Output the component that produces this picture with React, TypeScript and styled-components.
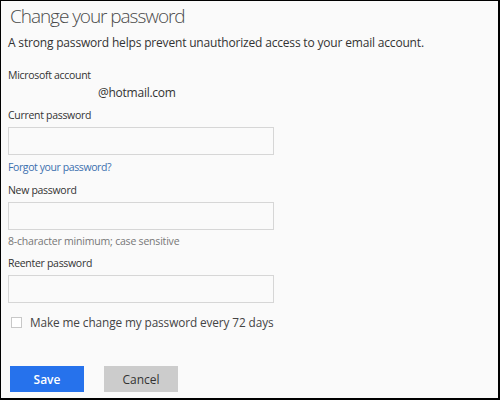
import React from "react";
import styled, { createGlobalStyle } from "styled-components";

const Global = createGlobalStyle`
  html, body { margin: 0; padding: 0; background: #000; }
  body { font-family: "Open Sans", "Noto Sans", sans-serif; }
  * { box-sizing: border-box; }
`;

const Frame = styled.div`
  width: 500px;
  height: 400px;
  background: #fafafa;
  border-style: solid;
  border-color: #000;
  border-width: 1px 2px 2px 1px;
  padding: 3px 0 0 7px;
  color: #333;
`;

const Title = styled.h1`
  margin: 0 0 0 2px;
  font-family: "Open Sans", sans-serif;
  font-size: 19px;
  line-height: 24px;
  font-weight: 300;
  letter-spacing: -1.05px;
  color: #4a4a4a;
`;

const Intro = styled.p`
  margin: 7px 0 0 0;
  font-size: 12px;
  line-height: 16px;
  letter-spacing: -0.18px;
  color: #333;
`;

const Label = styled.div<{ $top: number }>`
  margin-top: ${(p) => p.$top}px;
  font-size: 10.5px;
  line-height: 14px;
  letter-spacing: -0.3px;
  color: #333;
`;

const Email = styled.div`
  margin-top: 3px;
  padding-left: 90px;
  font-size: 12px;
  line-height: 16px;
  letter-spacing: -0.25px;
  color: #333;
`;

const Input = styled.input`
  display: block;
  width: 266px;
  height: 28px;
  margin: 5px 0 0 0;
  border: 1px solid #d6d6d6;
  background: #fafafa;
  padding: 0 6px;
  outline: none;
`;

const Link = styled.a`
  display: block;
  margin-top: 5px;
  font-size: 10.5px;
  line-height: 14px;
  letter-spacing: -0.4px;
  color: #3a6fae;
  text-decoration: none;
`;

const Hint = styled.div`
  margin-top: 4px;
  font-size: 10.5px;
  line-height: 14px;
  letter-spacing: -0.2px;
  color: #777;
`;

const CheckRow = styled.label`
  display: flex;
  align-items: center;
  gap: 8px;
  margin: 11px 0 0 3px;
  font-size: 11.8px;
  line-height: 16px;
  letter-spacing: -0.1px;
  color: #444;
`;

const Box = styled.span`
  flex: none;
  width: 11px;
  height: 11px;
  border: 1px solid #c8c8c8;
  background: #fff;
`;

const Buttons = styled.div`
  display: flex;
  gap: 20px;
  margin: 36px 0 0 2px;
`;

const Button = styled.button<{ $primary?: boolean }>`
  width: 74px;
  height: 26px;
  border: none;
  padding: 0;
  font-family: inherit;
  font-size: 12px;
  font-weight: ${(p) => (p.$primary ? 600 : 400)};
  color: ${(p) => (p.$primary ? "#fff" : "#333")};
  background: ${(p) => (p.$primary ? "#2672ec" : "#cccccc")};
`;

export default function App() {
  return (
    <>
      <Global />
      <Frame>
        <Title>Change your password</Title>
        <Intro>A strong password helps prevent unauthorized access to your email account.</Intro>
        <Label $top={17}>Microsoft account</Label>
        <Email>@hotmail.com</Email>
        <Label $top={7}>Current password</Label>
        <Input type="password" />
        <Link href="#">Forgot your password?</Link>
        <Label $top={9}>New password</Label>
        <Input type="password" />
        <Hint>8-character minimum; case sensitive</Hint>
        <Label $top={8}>Reenter password</Label>
        <Input type="password" />
        <CheckRow>
          <Box />
          Make me change my password every 72 days
        </CheckRow>
        <Buttons>
          <Button $primary>Save</Button>
          <Button>Cancel</Button>
        </Buttons>
      </Frame>
    </>
  );
}
